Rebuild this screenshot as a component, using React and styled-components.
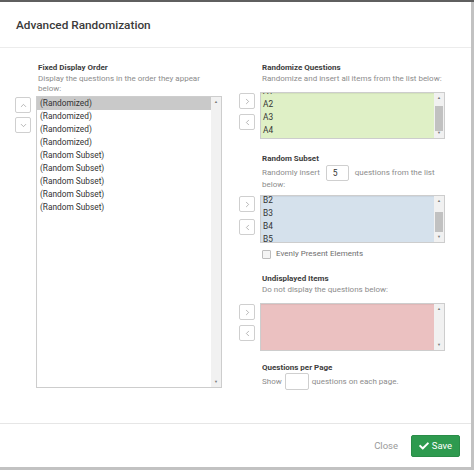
import React from 'react'
import styled, { createGlobalStyle } from 'styled-components'
import { FaCheck } from 'react-icons/fa'
import { ChevronUp, ChevronDown, ChevronRight, ChevronLeft } from 'lucide-react'

const GlobalStyle = createGlobalStyle`
  html, body {
    margin: 0;
    padding: 0;
    background: #c2c2c2;
  }
  body {
    font-family: Roboto, "Liberation Sans", sans-serif;
    width: 474px;
    height: 470px;
    overflow: hidden;
  }
`

const fixedItems = [
  '(Randomized)', '(Randomized)', '(Randomized)', '(Randomized)',
  '(Random Subset)', '(Random Subset)', '(Random Subset)', '(Random Subset)', '(Random Subset)',
]

function Scrollbar({ thumbTop, thumbHeight }) {
  return (
    <Bar>
      <BarArrow>▲</BarArrow>
      <Track>
        {thumbHeight ? <Thumb style={{ top: thumbTop, height: thumbHeight }} /> : null}
      </Track>
      <BarArrow>▼</BarArrow>
    </Bar>
  )
}

function MoveButtons({ up, gap }) {
  const First = up ? ChevronUp : ChevronRight
  const Second = up ? ChevronDown : ChevronLeft
  return (
    <Arrows $gap={gap}>
      <ArrowButton><First size={9} strokeWidth={1.6} /></ArrowButton>
      <ArrowButton><Second size={9} strokeWidth={1.6} /></ArrowButton>
    </Arrows>
  )
}

function App() {
  return (
    <Screen>
      <GlobalStyle />
      <TopEdge />
      <Modal>
        <Header>Advanced Randomization</Header>
        <Body>
          <LeftColumn>
            <Spacer />
            <div>
              <Title>Fixed Display Order</Title>
              <Desc>Display the questions in the order they appear<br />below:</Desc>
            </div>
            <MoveButtons up gap={4} />
            <ListBox $bg="#fff" $height={292}>
              <Items>
                {fixedItems.map((t, i) => (
                  <Item key={i} $selected={i === 0} $pad={3}>{t}</Item>
                ))}
              </Items>
              <Scrollbar />
            </ListBox>
          </LeftColumn>

          <RightColumn>
            <Group $top={0}>
              <Spacer />
              <div>
                <Title>Randomize Questions</Title>
                <Desc>Randomize and insert all items from the list below:</Desc>
              </div>
              <Spacer />
              <Gap $h={6} />
              <MoveButtons gap={5} />
              <ListBox $bg="#dff0c6" $height={47}>
                <Items $offset={-8}>
                  {['A1', 'A2', 'A3', 'A4'].map(t => <Item key={t}>{t}</Item>)}
                </Items>
                <Scrollbar thumbTop={3} thumbHeight={25} />
              </ListBox>
            </Group>

            <Group $top={15}>
              <Spacer />
              <div>
                <Title>Random Subset</Title>
                <InlineText>
                  Randomly insert<SmallInput $w={23} $h={16} $mx={6} defaultValue="5" />questions from the list
                  <br />below:
                </InlineText>
              </div>
              <Spacer />
              <Gap $h={4} />
              <MoveButtons gap={7} />
              <ListBox $bg="#d5e1ec" $height={48}>
                <Items $offset={-2}>
                  {['B2', 'B3', 'B4', 'B5'].map(t => <Item key={t}>{t}</Item>)}
                </Items>
                <Scrollbar thumbTop={6} thumbHeight={20} />
              </ListBox>
              <Spacer />
              <CheckRow>
                <CheckBox />
                Evenly Present Elements
              </CheckRow>
            </Group>

            <Group $top={15}>
              <Spacer />
              <div>
                <Title>Undisplayed Items</Title>
                <Desc>Do not display the questions below:</Desc>
              </div>
              <Spacer />
              <Gap $h={6} />
              <MoveButtons gap={5} />
              <ListBox $bg="#ebc1c1" $height={48}>
                <Items />
                <Scrollbar />
              </ListBox>
            </Group>

            <Group $top={12}>
              <Spacer />
              <div>
                <Title>Questions per Page</Title>
                <InlineText>
                  Show<SmallInput $w={24} $h={17} $mx={3} />questions on each page.
                </InlineText>
              </div>
            </Group>
          </RightColumn>
        </Body>
        <Footer>
          <CloseLink>Close</CloseLink>
          <SaveButton><FaCheck size={10} /> Save</SaveButton>
        </Footer>
      </Modal>
    </Screen>
  )
}

export default App

const Screen = styled.div`
  display: flex;
  flex-direction: column;
  width: 474px;
  height: 470px;
`

const TopEdge = styled.div`
  height: 2px;
  background: #5f5f5f;
`

const Modal = styled.div`
  width: 471px;
  height: 465px;
  background: #fff;
  display: flex;
  flex-direction: column;
`

const Header = styled.div`
  height: 45px;
  flex-shrink: 0;
  display: flex;
  align-items: center;
  padding-left: 16px;
  border-bottom: 1px solid #ececec;
  font-size: 11.8px;
  font-weight: 500;
  color: #3a3a3a;
`

const Body = styled.div`
  flex: 1;
  display: flex;
  padding: 15px 0 0 15px;
  gap: 17px;
  border-bottom: 1px solid #e6e6e6;
`

const LeftColumn = styled.div`
  display: grid;
  grid-template-columns: 16px 186px;
  column-gap: 5px;
  align-content: start;
`

const RightColumn = styled.div`
  display: flex;
  flex-direction: column;
`

const Group = styled.div`
  display: grid;
  grid-template-columns: 16px 185px;
  column-gap: 5px;
  align-content: start;
  margin-top: ${p => p.$top}px;
`

const Spacer = styled.div``

const Gap = styled.div`
  grid-column: 1 / span 2;
  height: ${p => p.$h}px;
`

const Title = styled.div`
  font-size: 8px;
  font-weight: 700;
  line-height: 10px;
  color: #3d3d3d;
  padding-left: 2px;
`

const Desc = styled.div`
  font-size: 8px;
  line-height: 10px;
  color: #8c8c8c;
  padding: 1px 0 2px 2px;
`

const InlineText = styled.div`
  font-size: 8px;
  line-height: 12px;
  color: #8c8c8c;
  padding: 3px 0 0 2px;
`

const SmallInput = styled.input`
  width: ${p => p.$w}px;
  height: ${p => p.$h}px;
  box-sizing: border-box;
  margin: -3px ${p => p.$mx}px;
  vertical-align: middle;
  border: 1px solid #cfcfcf;
  border-radius: 2px;
  padding: 0 0 0 6px;
  font-family: Roboto, "Liberation Sans", sans-serif;
  font-size: 8.5px;
  color: #333;
  background: #fff;
  outline: none;
`

const Arrows = styled.div`
  display: flex;
  flex-direction: column;
  gap: ${p => p.$gap}px;
  padding-top: 1px;
`

const ArrowButton = styled.div`
  width: 16px;
  height: 16px;
  box-sizing: border-box;
  border: 1px solid #cfcfcf;
  border-radius: 2px;
  background: #fff;
  display: flex;
  align-items: center;
  justify-content: center;
  color: #8a8a8a;
`

const ListBox = styled.div`
  height: ${p => p.$height}px;
  box-sizing: border-box;
  border: 1px solid #cdcdcd;
  box-shadow: inset 0 1px 1px rgba(0, 0, 0, 0.06);
  background: ${p => p.$bg};
  display: flex;
  overflow: hidden;
`

const Items = styled.div`
  flex: 1;
  display: flex;
  flex-direction: column;
  margin-top: ${p => p.$offset || 0}px;
`

const Item = styled.div`
  height: 13px;
  flex-shrink: 0;
  line-height: 13px;
  font-size: 8.3px;
  color: #333;
  padding-left: ${p => p.$pad || 2}px;
  background: ${p => (p.$selected ? '#c9c9c9' : 'transparent')};
`

const Bar = styled.div`
  width: 10px;
  flex-shrink: 0;
  background: #f1f1f1;
  display: flex;
  flex-direction: column;
`

const BarArrow = styled.div`
  height: 10px;
  font-size: 4px;
  line-height: 10px;
  text-align: center;
  color: #7a7a7a;
`

const Track = styled.div`
  flex: 1;
  position: relative;
`

const Thumb = styled.div`
  position: absolute;
  left: 1px;
  right: 1px;
  background: #c1c1c1;
`

const CheckRow = styled.div`
  display: flex;
  align-items: center;
  gap: 5px;
  margin-top: 6px;
  padding-left: 2px;
  font-size: 8px;
  line-height: 10px;
  color: #6e6e6e;
`

const CheckBox = styled.span`
  width: 7px;
  height: 7px;
  border: 1px solid #bdbdbd;
  border-radius: 1px;
  background: #f4f4f4;
`

const Footer = styled.div`
  height: 43px;
  flex-shrink: 0;
  display: flex;
  justify-content: flex-end;
  align-items: center;
  gap: 13px;
  padding-right: 11px;
`

const CloseLink = styled.span`
  font-size: 9.5px;
  color: #9a9a9a;
`

const SaveButton = styled.button`
  width: 49px;
  height: 22px;
  display: flex;
  align-items: center;
  justify-content: center;
  gap: 3px;
  border: 1px solid #2a8c48;
  border-radius: 2px;
  background: #2e9a4f;
  color: #fff;
  font-family: Roboto, "Liberation Sans", sans-serif;
  font-size: 9.5px;
  padding: 0;
`
